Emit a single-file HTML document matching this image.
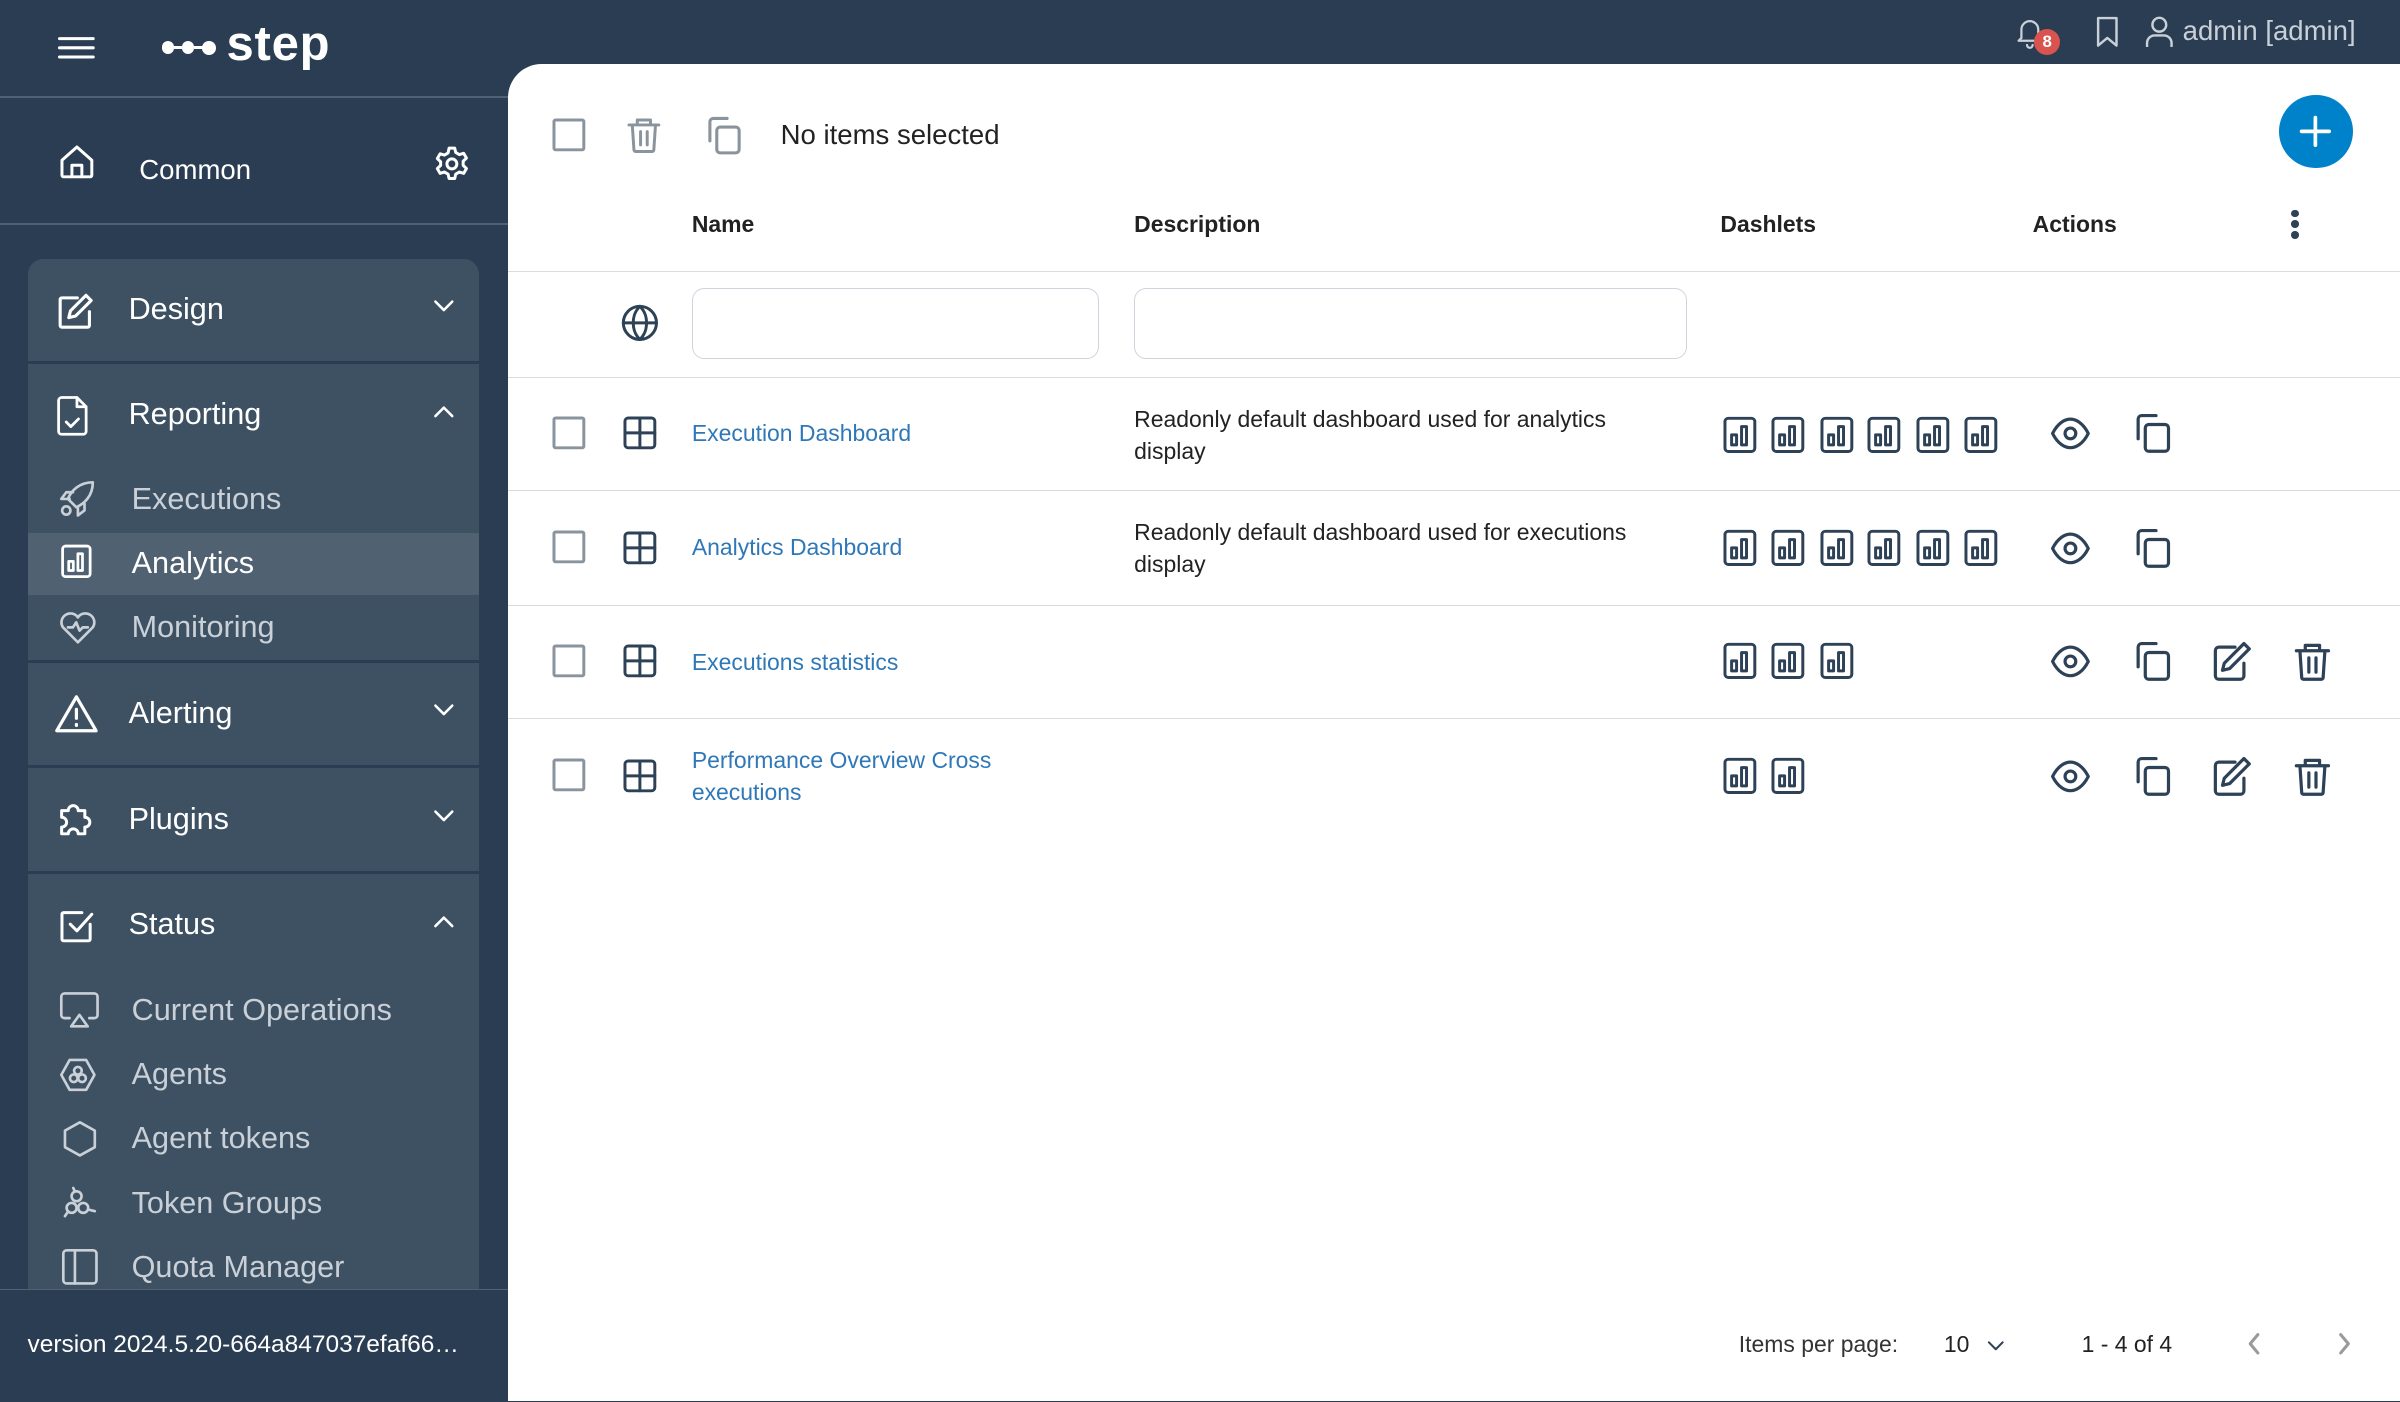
<!DOCTYPE html>
<html><head><meta charset="utf-8"><style>
html,body{margin:0;padding:0;}
body{width:1568px;height:915px;zoom:1.53061;background:#2a3d52;font-family:"Liberation Sans",sans-serif;position:relative;overflow:hidden;}
.a{position:absolute;}
.t{position:absolute;white-space:nowrap;line-height:1;}
svg.i{position:absolute;fill:none;stroke-linecap:round;stroke-linejoin:round;}
.side{stroke:#fff;stroke-width:1.8;}
.sub{stroke:#c9d0d8;stroke-width:1.6;}
.dk{stroke:#2d4257;stroke-width:1.8;}
.gr{stroke:#8a949e;stroke-width:1.8;}
.grp{position:absolute;left:18px;width:295px;background:#3e5162;}
.h1{font-size:20px;color:#fff;}
.s1{font-size:20px;color:#c9d0d8;}
.hl{position:absolute;left:332px;width:1236px;height:1px;background:#dcdcdc;}
.lnk{font-size:15px;color:#2f78b8;}
.desc{font-size:15px;color:#222;line-height:21px;}
</style></head><body>
<svg width="0" height="0" style="position:absolute">
<defs>
<symbol id="bar" viewBox="0 0 24 24"><rect x="3" y="2" width="18" height="20" rx="2"/><rect x="7" y="12" width="3" height="6"/><rect x="13" y="7" width="3" height="11"/></symbol>
<symbol id="eye" viewBox="0 0 24 24"><path d="M2 12C5 6 9 4 12 4s7 2 10 8c-3 6-7 8-10 8S5 18 2 12z"/><circle cx="12" cy="12" r="3"/></symbol>
<symbol id="copy" viewBox="0 0 24 24"><path d="M4 15V4a2 2 0 0 1 2-2h8"/><rect x="8" y="7" width="13" height="15" rx="2"/></symbol>
<symbol id="edit" viewBox="0 0 24 24"><path d="M14 4H5a2 2 0 0 0-2 2v14a2 2 0 0 0 2 2h12a2 2 0 0 0 2-2v-7"/><path d="M19 2l3 3-11 11-4 1 1-4z"/></symbol>
<symbol id="trash" viewBox="0 0 24 24"><path d="M3 6h18M8 6V3h8v3M5 6l1 15a1 1 0 0 0 1 1h10a1 1 0 0 0 1-1l1-15M10 10v8M14 10v8"/></symbol>
<symbol id="grid" viewBox="0 0 24 24"><rect x="3" y="3" width="18" height="18" rx="2"/><path d="M12 3v18M3 12h18"/></symbol>
<symbol id="cb" viewBox="0 0 24 24"><rect x="3" y="3" width="18" height="18" rx="1"/></symbol>
<symbol id="chev" viewBox="0 0 24 24"><path d="M6 9l6 6 6-6"/></symbol>
<symbol id="chevu" viewBox="0 0 24 24"><path d="M6 15l6-6 6 6"/></symbol>
</defs></svg>

<!-- top bar -->
<svg class="i side" style="left:38px;top:20px;stroke-width:2" width="24" height="22" viewBox="0 0 24 22"><path d="M1 5h22M1 11h22M1 17h22"/></svg>
<div class="a" style="left:106px;top:27px;width:8px;height:8px;border-radius:50%;background:#fff"></div>
<div class="a" style="left:114px;top:30px;width:6px;height:2px;background:#fff"></div>
<div class="a" style="left:119px;top:27px;width:8px;height:8px;border-radius:50%;background:#fff"></div>
<div class="a" style="left:127px;top:30px;width:6px;height:2px;background:#fff"></div>
<div class="a" style="left:132px;top:27px;width:9px;height:9px;border-radius:50%;background:#fff"></div>
<div class="t" style="left:148px;top:13px;font-size:32px;font-weight:bold;color:#fff;letter-spacing:0.5px">step</div>

<svg class="i sub" style="left:1315px;top:9px" width="22" height="24" viewBox="0 0 24 24"><path d="M6 16V10a6 6 0 0 1 12 0v6l2 2H4z"/><path d="M10 21a2 2 0 0 0 4 0"/></svg>
<div class="t" style="left:1329px;top:19px;width:17px;height:17px;border-radius:50%;background:#d9534f;color:#fff;font-size:11px;font-weight:bold;text-align:center;line-height:17px">8</div>
<svg class="i sub" style="left:1367px;top:10px" width="20" height="22" viewBox="0 0 20 22"><path d="M4 2h12v18l-6-5-6 5z"/></svg>
<svg class="i sub" style="left:1401px;top:9px" width="20" height="22" viewBox="0 0 20 22"><circle cx="10" cy="7" r="4.5"/><path d="M2 21v-2a5 5 0 0 1 5-5h6a5 5 0 0 1 5 5v2"/></svg>
<div class="t" style="left:1426px;top:11px;font-size:18px;color:#c9d0d8">admin [admin]</div>

<!-- sidebar -->
<div class="a" style="left:0;top:63px;width:332px;height:1px;background:#4f6173"></div>
<svg class="i side" style="left:37px;top:93px" width="26" height="26" viewBox="0 0 24 24"><path d="M3 11L12 3l9 8v9a1 1 0 0 1-1 1H4a1 1 0 0 1-1-1z"/><path d="M9 21v-7h6v7"/></svg>
<div class="t" style="left:91px;top:102px;font-size:18px;color:#fff">Common</div>
<svg class="i side" style="left:282px;top:94px" width="26" height="26" viewBox="0 0 24 24"><circle cx="12" cy="12" r="3"/><path d="M10.3 2.5h3.4l.6 2.6 2.2 1.3 2.6-.8 1.7 2.9-2 1.9v2.5l2 1.9-1.7 2.9-2.6-.8-2.2 1.3-.6 2.6h-3.4l-.6-2.6-2.2-1.3-2.6.8-1.7-2.9 2-1.9V10.7l-2-1.9 1.7-2.9 2.6.8 2.2-1.3z"/></svg>
<div class="a" style="left:0;top:146px;width:332px;height:1px;background:#4f6173"></div>

<div class="grp" style="top:169px;height:67px;border-radius:10px 10px 0 0"></div>
<svg class="i side" style="left:36px;top:190px" width="27" height="27" viewBox="0 0 24 24"><path d="M13 4H4a1 1 0 0 0-1 1v15a1 1 0 0 0 1 1h15a1 1 0 0 0 1-1v-8"/><path d="M18 2.5l3 3-9 9-4 1 1-4z"/></svg>
<div class="t h1" style="left:84px;top:192px">Design</div>
<svg class="i side" style="left:279px;top:189px" width="22" height="22"><use href="#chev"/></svg>

<div class="grp" style="top:238px;height:193px"></div>
<div class="a" style="left:18px;top:348px;width:295px;height:41px;background:#506272"></div>
<svg class="i side" style="left:35px;top:259px" width="24" height="26" viewBox="0 0 24 26"><path d="M3 3a2 2 0 0 1 2-2h10l6 6v16a2 2 0 0 1-2 2H5a2 2 0 0 1-2-2z"/><path d="M15 1v6h6M8 17l3 3 5-5"/></svg>
<div class="t h1" style="left:84px;top:261px">Reporting</div>
<svg class="i side" style="left:279px;top:258px" width="22" height="22"><use href="#chevu"/></svg>
<svg class="i sub" style="left:38px;top:313px" width="26" height="26" viewBox="0 0 24 24"><path d="M9 15l-3-3c2-5 7-10 15-10 0 8-5 13-10 15z"/><path d="M9 8H5l-3 4h5M16 15v4l-4 3v-5"/><circle cx="5" cy="19" r="2.5"/></svg>
<div class="t s1" style="left:86px;top:316px">Executions</div>
<svg class="i" style="left:38px;top:355px;stroke:#fff;stroke-width:1.8" width="24" height="24"><use href="#bar"/></svg>
<div class="t" style="left:86px;top:358px;font-size:20px;color:#fff">Analytics</div>
<svg class="i sub" style="left:38px;top:398px" width="26" height="24" viewBox="0 0 24 22"><path d="M12 20L3 11a5 5 0 0 1 9-6 5 5 0 0 1 9 6z"/><path d="M6 11h3l2-3 2 5 2-2h3"/></svg>
<div class="t s1" style="left:86px;top:400px">Monitoring</div>

<div class="grp" style="top:433px;height:67px"></div>
<svg class="i side" style="left:36px;top:453px" width="28" height="26" viewBox="0 0 24 22"><path d="M12 2L1 21h22z"/><path d="M12 9v5M12 17.5v.5"/></svg>
<div class="t h1" style="left:84px;top:456px">Alerting</div>
<svg class="i side" style="left:279px;top:453px" width="22" height="22"><use href="#chev"/></svg>

<div class="grp" style="top:502px;height:67px"></div>
<svg class="i side" style="left:36px;top:522px" width="26" height="26" viewBox="0 0 24 24"><path d="M4 7h4a3 3 0 0 1 6 0h4v4a3 3 0 0 1 0 6v4h-4a3 3 0 0 0-6 0H4v-4a3 3 0 0 0 0-6z"/></svg>
<div class="t h1" style="left:84px;top:525px">Plugins</div>
<svg class="i side" style="left:279px;top:522px" width="22" height="22"><use href="#chev"/></svg>

<div class="grp" style="top:571px;height:271px"></div>
<svg class="i side" style="left:37px;top:592px" width="26" height="26" viewBox="0 0 24 24"><path d="M20 11v9a1 1 0 0 1-1 1H4a1 1 0 0 1-1-1V5a1 1 0 0 1 1-1h11"/><path d="M8 11l4 4 9-10"/></svg>
<div class="t h1" style="left:84px;top:594px">Status</div>
<svg class="i side" style="left:279px;top:591px" width="22" height="22"><use href="#chevu"/></svg>
<svg class="i sub" style="left:38px;top:647px" width="28" height="26" viewBox="0 0 26 24"><path d="M7 17H4a2 2 0 0 1-2-2V4a2 2 0 0 1 2-2h18a2 2 0 0 1 2 2v11a2 2 0 0 1-2 2h-3"/><path d="M13 15l5 7H8z"/></svg>
<div class="t s1" style="left:86px;top:650px">Current Operations</div>
<svg class="i sub" style="left:38px;top:689px" width="26" height="26" viewBox="0 0 24 24"><path d="M7 3h10l5 9-5 9H7l-5-9z"/><circle cx="12" cy="9.5" r="2.3"/><circle cx="9.5" cy="14" r="2.3"/><circle cx="14.5" cy="14" r="2.3"/></svg>
<div class="t s1" style="left:86px;top:692px">Agents</div>
<svg class="i sub" style="left:39px;top:731px" width="26" height="26" viewBox="0 0 24 24"><path d="M12 2l9 5v10l-9 5-9-5V7z"/></svg>
<div class="t s1" style="left:86px;top:734px">Agent tokens</div>
<svg class="i sub" style="left:39px;top:773px" width="26" height="26" viewBox="0 0 24 24"><circle cx="10" cy="8" r="3"/><circle cx="7" cy="15" r="3"/><circle cx="14" cy="15" r="3"/><path d="M8 3l1 2M3 20l2-3M17 16l4 1"/></svg>
<div class="t s1" style="left:86px;top:776px">Token Groups</div>
<svg class="i sub" style="left:39px;top:815px" width="26" height="26" viewBox="0 0 24 24"><rect x="2" y="2" width="20" height="20" rx="2"/><path d="M9 2v20"/></svg>
<div class="t s1" style="left:86px;top:818px">Quota Manager</div>

<div class="a" style="left:0;top:842px;width:332px;height:73px;background:#2a3d52;border-top:1px solid #4f6173"></div>
<div class="t" style="left:18px;top:871px;font-size:16px;color:#fff">version 2024.5.20-664a847037efaf66…</div>

<!-- content -->
<div class="a" style="left:332px;top:42px;width:1236px;height:873px;background:#fff;border-top-left-radius:22px"></div>
<svg class="i gr" style="left:359px;top:75px" width="26" height="26"><use href="#cb"/></svg>
<svg class="i gr" style="left:408px;top:75px" width="26" height="26"><use href="#trash"/></svg>
<svg class="i gr" style="left:459px;top:75px" width="27" height="27"><use href="#copy"/></svg>
<div class="t" style="left:510px;top:79px;font-size:18px;color:#222">No items selected</div>
<div class="a" style="left:1489px;top:62px;width:48px;height:48px;border-radius:50%;background:#0082cb"></div>
<svg class="i" style="left:1501px;top:74px;stroke:#fff;stroke-width:2.4" width="24" height="24" viewBox="0 0 24 24"><path d="M12 3v18M3 12h18"/></svg>

<div class="t" style="left:452px;top:139px;font-size:15px;font-weight:bold;color:#222">Name</div>
<div class="t" style="left:741px;top:139px;font-size:15px;font-weight:bold;color:#222">Description</div>
<div class="t" style="left:1124px;top:139px;font-size:15px;font-weight:bold;color:#222">Dashlets</div>
<div class="t" style="left:1328px;top:139px;font-size:15px;font-weight:bold;color:#222">Actions</div>
<div class="a" style="left:1497px;top:137px;width:5px;height:5px;border-radius:50%;background:#2d4257"></div>
<div class="a" style="left:1497px;top:144px;width:5px;height:5px;border-radius:50%;background:#2d4257"></div>
<div class="a" style="left:1497px;top:151px;width:5px;height:5px;border-radius:50%;background:#2d4257"></div>
<div class="hl" style="top:177px"></div>

<svg class="i dk" style="left:405px;top:198px" width="26" height="26" viewBox="0 0 24 24"><circle cx="12" cy="12" r="10"/><path d="M2 12h20M12 2c-3 3-4 6-4 10s1 7 4 10c3-3 4-6 4-10s-1-7-4-10"/></svg>
<div class="a" style="left:452px;top:188px;width:265px;height:45px;border:1px solid #cfd4dc;border-radius:8px"></div>
<div class="a" style="left:741px;top:188px;width:360px;height:45px;border:1px solid #cfd4dc;border-radius:8px"></div>
<div class="hl" style="top:246px"></div>

<!-- row 1 -->
<svg class="i gr" style="left:359px;top:270px" width="26" height="26"><use href="#cb"/></svg>
<svg class="i dk" style="left:405px;top:270px" width="26" height="26"><use href="#grid"/></svg>
<div class="t lnk" style="left:452px;top:276px">Execution Dashboard</div>
<div class="a desc" style="left:741px;top:263px;width:350px">Readonly default dashboard used for analytics display</div>
<div class="a" style="left:1124px;top:271px;height:26px">
<svg class="i dk" style="left:0" width="26" height="26"><use href="#bar"/></svg><svg class="i dk" style="left:31px" width="26" height="26"><use href="#bar"/></svg><svg class="i dk" style="left:63px" width="26" height="26"><use href="#bar"/></svg><svg class="i dk" style="left:94px" width="26" height="26"><use href="#bar"/></svg><svg class="i dk" style="left:126px" width="26" height="26"><use href="#bar"/></svg><svg class="i dk" style="left:157px" width="26" height="26"><use href="#bar"/></svg></div>
<svg class="i dk" style="left:1339px;top:269px" width="28" height="28"><use href="#eye"/></svg>
<svg class="i dk" style="left:1392px;top:269px" width="28" height="28"><use href="#copy"/></svg>
<div class="hl" style="top:320px"></div>

<!-- row 2 -->
<svg class="i gr" style="left:359px;top:344px" width="26" height="26"><use href="#cb"/></svg>
<svg class="i dk" style="left:405px;top:345px" width="26" height="26"><use href="#grid"/></svg>
<div class="t lnk" style="left:452px;top:350px">Analytics Dashboard</div>
<div class="a desc" style="left:741px;top:337px;width:350px">Readonly default dashboard used for executions display</div>
<div class="a" style="left:1124px;top:345px;height:26px">
<svg class="i dk" style="left:0" width="26" height="26"><use href="#bar"/></svg><svg class="i dk" style="left:31px" width="26" height="26"><use href="#bar"/></svg><svg class="i dk" style="left:63px" width="26" height="26"><use href="#bar"/></svg><svg class="i dk" style="left:94px" width="26" height="26"><use href="#bar"/></svg><svg class="i dk" style="left:126px" width="26" height="26"><use href="#bar"/></svg><svg class="i dk" style="left:157px" width="26" height="26"><use href="#bar"/></svg></div>
<svg class="i dk" style="left:1339px;top:344px" width="28" height="28"><use href="#eye"/></svg>
<svg class="i dk" style="left:1392px;top:344px" width="28" height="28"><use href="#copy"/></svg>
<div class="hl" style="top:395px"></div>

<!-- row 3 -->
<svg class="i gr" style="left:359px;top:419px" width="26" height="26"><use href="#cb"/></svg>
<svg class="i dk" style="left:405px;top:419px" width="26" height="26"><use href="#grid"/></svg>
<div class="t lnk" style="left:452px;top:425px">Executions statistics</div>
<div class="a" style="left:1124px;top:419px;height:26px">
<svg class="i dk" style="left:0" width="26" height="26"><use href="#bar"/></svg><svg class="i dk" style="left:31px" width="26" height="26"><use href="#bar"/></svg><svg class="i dk" style="left:63px" width="26" height="26"><use href="#bar"/></svg></div>
<svg class="i dk" style="left:1339px;top:418px" width="28" height="28"><use href="#eye"/></svg>
<svg class="i dk" style="left:1392px;top:418px" width="28" height="28"><use href="#copy"/></svg>
<svg class="i dk" style="left:1444px;top:418px" width="28" height="28"><use href="#edit"/></svg>
<svg class="i dk" style="left:1497px;top:418px" width="28" height="28"><use href="#trash"/></svg>
<div class="hl" style="top:469px"></div>

<!-- row 4 -->
<svg class="i gr" style="left:359px;top:493px" width="26" height="26"><use href="#cb"/></svg>
<svg class="i dk" style="left:405px;top:494px" width="26" height="26"><use href="#grid"/></svg>
<div class="a lnk" style="left:452px;top:486px;line-height:21px;width:230px">Performance Overview Cross executions</div>
<div class="a" style="left:1124px;top:494px;height:26px">
<svg class="i dk" style="left:0" width="26" height="26"><use href="#bar"/></svg><svg class="i dk" style="left:31px" width="26" height="26"><use href="#bar"/></svg></div>
<svg class="i dk" style="left:1339px;top:493px" width="28" height="28"><use href="#eye"/></svg>
<svg class="i dk" style="left:1392px;top:493px" width="28" height="28"><use href="#copy"/></svg>
<svg class="i dk" style="left:1444px;top:493px" width="28" height="28"><use href="#edit"/></svg>
<svg class="i dk" style="left:1497px;top:493px" width="28" height="28"><use href="#trash"/></svg>

<!-- paginator -->
<div class="t" style="left:1136px;top:871px;font-size:15px;color:#333">Items per page:</div>
<div class="t" style="left:1270px;top:871px;font-size:15px;color:#222">10</div>
<svg class="i dk" style="left:1295px;top:870px" width="18" height="18"><use href="#chev"/></svg>
<div class="t" style="left:1360px;top:871px;font-size:15px;color:#222">1 - 4 of 4</div>
<svg class="i" style="left:1464px;top:869px;stroke:#9a9a9a;stroke-width:2" width="18" height="18" viewBox="0 0 18 18"><path d="M11 3l-5 6 5 6"/></svg>
<svg class="i" style="left:1522px;top:869px;stroke:#9a9a9a;stroke-width:2" width="18" height="18" viewBox="0 0 18 18"><path d="M7 3l5 6-5 6"/></svg>
</body></html>
